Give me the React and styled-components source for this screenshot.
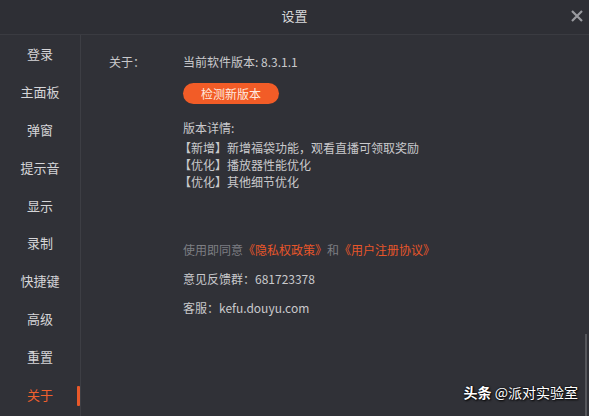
import React from "react";
import styled, { createGlobalStyle } from "styled-components";

const GlobalStyle = createGlobalStyle`
  html, body { margin: 0; padding: 0; background: #303137; }
  body { font-family: "Noto Sans CJK SC", "Microsoft YaHei", sans-serif; }
`;

const menu = ["登录", "主面板", "弹窗", "提示音", "显示", "录制", "快捷键", "高级", "重置", "关于"];

const notes = [
  ["新增", "新增福袋功能，观看直播可领取奖励"],
  ["优化", "播放器性能优化"],
  ["优化", "其他细节优化"],
];

export default function App() {
  return (
    <>
      <GlobalStyle />
      <Window>
        <TitleBar>
          <Title>设置</Title>
          <Close aria-label="close">
            <svg width="12" height="12" viewBox="0 0 12 12">
              <path d="M1 1 L11 11 M11 1 L1 11" stroke="#9a9ba0" strokeWidth="2.2" />
            </svg>
          </Close>
        </TitleBar>
        <Body>
          <Sidebar>
            {menu.map((m) => (
              <MenuItem key={m} active={m === "关于"}>{m}</MenuItem>
            ))}
          </Sidebar>
          <Content>
            <Row>
              <Label>关于：</Label>
              <Info>
                <Text>当前软件版本: 8.3.1.1</Text>
                <CheckButton>检测新版本</CheckButton>
                <Text>版本详情:</Text>
                <Notes>
                  {notes.map(([tag, text], i) => (
                    <Text key={i}>【{tag}】{text}</Text>
                  ))}
                </Notes>
                <Footer>
                  <Muted>
                    使用即同意<Link>《隐私权政策》</Link>和<Link>《用户注册协议》</Link>
                  </Muted>
                  <Text>意见反馈群：681723378</Text>
                  <Text>客服：kefu.douyu.com</Text>
                </Footer>
              </Info>
            </Row>
          </Content>
          <Scrollbar />
        </Body>
        <Watermark><b>头条</b> @派对实验室</Watermark>
      </Window>
    </>
  );
}

const Window = styled.div`
  position: relative;
  width: 589px;
  height: 416px;
  background: #303137;
  overflow: hidden;
  display: flex;
  flex-direction: column;
`;

const TitleBar = styled.div`
  position: relative;
  height: 34px;
  flex: none;
  display: flex;
  align-items: center;
  justify-content: center;
  background: #2e2f35;
  border-bottom: 1px solid #3a3b41;
`;

const Title = styled.div`
  color: #d9d9db;
  font-size: 13px;
  margin-top: -3px;
`;

const Close = styled.div`
  position: absolute;
  right: 6px;
  top: 10px;
  width: 12px;
  height: 12px;
  display: flex;
`;

const Body = styled.div`
  flex: 1;
  display: flex;
`;

const Sidebar = styled.div`
  width: 80px;
  flex: none;
  border-right: 1px solid #3d3e44;
  display: flex;
  flex-direction: column;
`;

const MenuItem = styled.div`
  position: relative;
  height: 37.9px;
  line-height: 38px;
  text-align: center;
  font-size: 13px;
  color: ${(p) => (p.active ? "#f0602e" : "#d5d5d8")};

  ${(p) =>
    p.active &&
    `
    &::after {
      content: "";
      position: absolute;
      right: 0;
      top: 10px;
      width: 3px;
      height: 20px;
      border-radius: 1px;
      background: #e9592a;
    }
  `}
`;

const Content = styled.div`
  flex: 1;
  padding: 18px 0 0 28px;
`;

const Row = styled.div`
  display: flex;
`;

const Label = styled.div`
  width: 74px;
  flex: none;
  color: #c9c9cc;
  font-size: 12px;
  line-height: 17px;
`;

const Info = styled.div`
  display: flex;
  flex-direction: column;
  align-items: flex-start;
`;

const Text = styled.div`
  color: #c9c9cc;
  font-size: 12px;
  line-height: 17px;
`;

const CheckButton = styled.button`
  margin: 13px 0 15px;
  width: 96px;
  height: 21px;
  border: none;
  border-radius: 11px;
  background: #f25c27;
  color: #ffe9df;
  font-family: inherit;
  font-size: 12px;
  padding: 0;
`;

const Notes = styled.div`
  margin-top: 3px;
  margin-left: -4px;
`;

const Footer = styled.div`
  margin-top: 51px;
  display: flex;
  flex-direction: column;
  gap: 12px;
`;

const Muted = styled.div`
  color: #7d7e83;
  font-size: 12px;
  line-height: 17px;
`;

const Link = styled.span`
  color: #e8562a;
`;

const Scrollbar = styled.div`
  position: absolute;
  right: 2px;
  bottom: 0;
  width: 2px;
  height: 82px;
  background: #55565b;
`;

const Watermark = styled.div`
  position: absolute;
  right: 11px;
  bottom: 14px;
  color: #ffffff;
  font-size: 14px;
  text-shadow: 0 0 2px #000, 1px 1px 2px #000;
  b { font-weight: 700; }
`;
